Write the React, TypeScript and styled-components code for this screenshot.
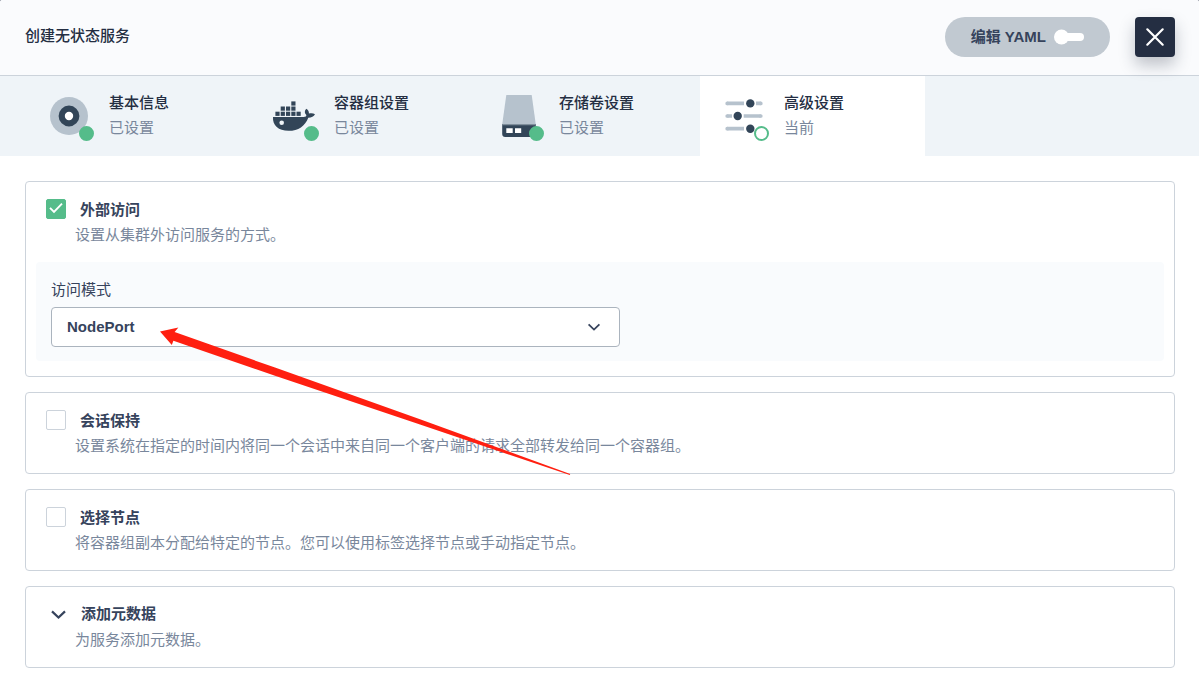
import React, { useState } from "react";
import styled, { createGlobalStyle, css } from "styled-components";

const GlobalStyle = createGlobalStyle`
  *, *::before, *::after { box-sizing: border-box; }
  html { background: #4a5266; }
  body { margin: 0; }
  body, button, select, input {
    font-family: "Liberation Sans", "Noto Sans CJK SC", sans-serif;
    font-size: 15px;
    line-height: 20px;
  }
  h1, h2, p { margin: 0; }
`;

const Page = styled.div`
  position: relative;
  min-height: 100vh;
  background: #fff;
  border-radius: 2px 2px 0 0;
  color: #36435c;
`;

const Header = styled.header`
  display: flex;
  align-items: center;
  gap: 25px;
  padding: 17px 24px 18px 25px;
  background: #fafbfd;
  border-bottom: 1px solid #ccd3db;
  border-radius: 2px 2px 0 0;
`;

const Title = styled.h1`
  flex: 1;
  padding-bottom: 2px;
  font-size: 15px;
  line-height: 20px;
  font-weight: 500;
  color: #242e42;
`;

const YamlButton = styled.button`
  display: flex;
  align-items: center;
  gap: 8px;
  height: 40px;
  padding: 0 26px;
  border: 0;
  border-radius: 20px;
  background: #c1c9d1;
  color: #36435c;
  font-weight: 700;
  white-space: nowrap;
`;

const CloseButton = styled.button`
  display: grid;
  place-items: center;
  width: 40px;
  height: 40px;
  padding: 0;
  border: 0;
  border-radius: 4px;
  background: #242e42;
  box-shadow: 0 8px 16px 0 rgba(36, 46, 66, 0.28);
`;

const Steps = styled.nav`
  display: flex;
  padding: 0 25px;
  background: #eff4f8;
`;

const Step = styled.button<{ $current: boolean }>`
  display: flex;
  align-items: center;
  gap: 20px;
  width: 225px;
  height: 80px;
  padding: 0 24px;
  border: 0;
  text-align: left;
  background: ${(p) => (p.$current ? "#fff" : "transparent")};
`;

const StepIcon = styled.span`
  position: relative;
  width: 40px;
  height: 40px;

  svg {
    display: block;
    overflow: visible;
  }
`;

const StatusDot = styled.span<{ $current: boolean }>`
  position: absolute;
  right: -5px;
  bottom: -5px;
  width: 15px;
  height: 15px;
  border: 2px solid #55bc8a;
  border-radius: 50%;
  background: ${(p) => (p.$current ? "#fff" : "#55bc8a")};
`;

const StepText = styled.span`
  display: grid;
  gap: 5px;
  padding-bottom: 2px;
`;

const StepName = styled.span`
  font-weight: 500;
  color: #242e42;
`;

const StepState = styled.span`
  color: #79879c;
`;

const Content = styled.main`
  display: grid;
  gap: 15px;
  padding: 25px 24px 20px 25px;
`;

const Card = styled.section`
  border: 1px solid #ccd3db;
  border-radius: 4px;
`;

const CardHead = styled.div`
  display: grid;
  gap: 6px;
  padding: 17px 20px;
`;

const headRow = css`
  display: flex;
  align-items: center;
  justify-self: start;
  height: 20px;
  font-weight: 700;
  color: #36435c;
`;

const CheckLabel = styled.label`
  ${headRow}
  gap: 14px;
`;

const CheckText = styled.span`
  padding-top: 2px;
`;

const ToggleButton = styled.button`
  ${headRow}
  gap: 11px;
  padding: 0;
  border: 0;
  background: none;
`;

const CheckBox = styled.span`
  display: grid;

  > * {
    grid-area: 1 / 1;
  }

  svg {
    pointer-events: none;
  }
`;

const CheckInput = styled.input`
  appearance: none;
  width: 20px;
  height: 20px;
  margin: 0;
  border: 1px solid #ccd3db;
  border-radius: 2px;
  background: #fff;

  &:checked {
    border-color: #55bc8a;
    background: #55bc8a;
  }
`;

const Description = styled.p`
  padding-left: 29px;
  color: #79879c;
`;

const Panel = styled.div`
  display: grid;
  gap: 7px;
  margin: 0 10px 15px;
  padding: 18px 15px 14px;
  border-radius: 4px;
  background: #f9fbfd;
`;

const SelectWrap = styled.div`
  display: grid;
  grid-template-columns: 1fr auto;
  align-items: center;
  width: calc(50% + 20px);

  svg {
    grid-area: 1 / 2;
    margin-right: 16px;
    pointer-events: none;
  }
`;

const SelectBox = styled.select`
  grid-area: 1 / 1 / 2 / 3;
  appearance: none;
  width: 100%;
  height: 40px;
  padding: 0 15px;
  border: 1px solid #abb4be;
  border-radius: 4px;
  background: #fff;
  color: #36435c;
  font-weight: 700;
`;

const Pointer = styled.svg`
  position: absolute;
  left: 160px;
  top: 327px;
  pointer-events: none;
`;

const DARK = "#324558";
const LIGHT = "#b6c2cd";

const DiscIcon = () => (
  <svg width="40" height="40" viewBox="0 0 40 40" aria-hidden="true">
    <circle cx="20" cy="20" r="19" fill={LIGHT} />
    <circle cx="20" cy="20" r="7.3" fill="#fff" stroke={DARK} strokeWidth="6.2" />
  </svg>
);

const crates = [
  [17.3, 5.4],
  [6.7, 10.5], [12, 10.5], [17.3, 10.5],
  [1.4, 15.7], [6.7, 15.7], [12, 15.7], [17.3, 15.7], [22.5, 15.7],
];

const WhaleIcon = () => (
  <svg width="40" height="40" viewBox="0 0 40 40" aria-hidden="true" fill={DARK}>
    {crates.map(([x, y]) => (
      <rect key={`${x}-${y}`} x={x} y={y} width="4.2" height="4.2" />
    ))}
    <path d="M-1 21H29.5C31.6 21 32.6 20.2 32.3 19C30.4 17.4 30.3 14.6 32.3 12.8C34.4 14.2 35.1 15.9 34.9 17.6C37 16.8 39.4 17.1 41 18.2C39.8 20.6 37.6 21.6 34.3 21.7C31 30 24.5 34.8 14.5 34.8C4.5 34.8 -1.6 29.4 -1 21Z" />
    <circle cx="7.7" cy="26.7" r="2.3" fill="#eff4f8" />
  </svg>
);

const DriveIcon = () => (
  <svg width="40" height="40" viewBox="0 0 40 40" aria-hidden="true">
    <path d="M7.3 -1H32.7L36.8 28.5H3.2Z" fill={LIGHT} />
    <path d="M3.2 28H36.8V38A3 3 0 0 1 33.8 41H6.2A3 3 0 0 1 3.2 38Z" fill={DARK} />
    <path d="M3.2 28H36.8V29.2H3.2Z" fill="#7f8e9b" />
    <path d="M7.3 32.2H13.7V37H7.3ZM16 32.2H22.2V37H16Z" fill="#fff" />
  </svg>
);

const SlidersIcon = () => (
  <svg width="40" height="40" viewBox="0 0 40 40" aria-hidden="true">
    <g stroke={LIGHT} strokeWidth="3.7">
      <path d="M3.2 7.4H20M32 7.4H36.8M3.2 20H8M19.7 20H36.8M3.2 32.7H20" />
      <path d="M3.2 7.4H3.3M36.7 7.4H36.8M3.2 20H3.3M36.7 20H36.8M3.2 32.7H3.3" strokeLinecap="round" />
    </g>
    <g fill={DARK}>
      <circle cx="26.3" cy="7.4" r="4.2" />
      <circle cx="13.7" cy="20" r="4.2" />
      <circle cx="26.3" cy="32.7" r="4.2" />
    </g>
  </svg>
);

const SwitchIcon = () => (
  <svg width="30" height="16" viewBox="0 0 30 16" aria-hidden="true" fill="#fff">
    <rect x="6" y="4" width="24" height="8" rx="4" />
    <circle cx="7.5" cy="8" r="7.5" />
  </svg>
);

const steps = [
  { name: "基本信息", state: "已设置", icon: <DiscIcon /> },
  { name: "容器组设置", state: "已设置", icon: <WhaleIcon /> },
  { name: "存储卷设置", state: "已设置", icon: <DriveIcon /> },
  { name: "高级设置", state: "当前", icon: <SlidersIcon />, current: true },
];

interface OptionProps {
  title: string;
  description: string;
  initial?: boolean;
  children?: React.ReactNode;
}

function OptionCard({ title, description, initial = false, children }: OptionProps) {
  const [checked, setChecked] = useState(initial);
  return (
    <Card>
      <CardHead>
        <CheckLabel>
          <CheckBox>
            <CheckInput type="checkbox" checked={checked} onChange={(e) => setChecked(e.target.checked)} />
            {checked && (
              <svg width="20" height="20" viewBox="0 0 20 20" aria-hidden="true">
                <path d="M4 8.8L8 12.8L16 4.6" fill="none" stroke="#fff" strokeWidth="1.9" />
              </svg>
            )}
          </CheckBox>
          <CheckText>{title}</CheckText>
        </CheckLabel>
        <Description>{description}</Description>
      </CardHead>
      {checked && children}
    </Card>
  );
}

export default function App() {
  return (
    <Page>
      <GlobalStyle />
      <Header>
        <Title>创建无状态服务</Title>
        <YamlButton type="button">
          编辑 YAML
          <SwitchIcon />
        </YamlButton>
        <CloseButton type="button" aria-label="关闭">
          <svg width="20" height="20" viewBox="0 0 20 20" aria-hidden="true">
            <path d="M2.3 2.3L17.7 17.7M17.7 2.3L2.3 17.7" stroke="#fff" strokeWidth="2.2" strokeLinecap="round" />
          </svg>
        </CloseButton>
      </Header>

      <Steps>
        {steps.map((s) => (
          <Step key={s.name} type="button" $current={!!s.current} aria-current={s.current ? "step" : undefined}>
            <StepIcon>
              {s.icon}
              <StatusDot $current={!!s.current} />
            </StepIcon>
            <StepText>
              <StepName>{s.name}</StepName>
              <StepState>{s.state}</StepState>
            </StepText>
          </Step>
        ))}
      </Steps>

      <Content>
        <OptionCard title="外部访问" description="设置从集群外访问服务的方式。" initial>
          <Panel>
            <label htmlFor="access-mode">访问模式</label>
            <SelectWrap>
              <SelectBox id="access-mode" defaultValue="NodePort">
                <option>NodePort</option>
                <option>LoadBalancer</option>
              </SelectBox>
              <svg width="20" height="20" viewBox="0 0 20 20" aria-hidden="true">
                <path d="M4.6 7.4L10 12.6L15.4 7.4" fill="none" stroke="#36435c" strokeWidth="1.8" />
              </svg>
            </SelectWrap>
          </Panel>
        </OptionCard>
        <OptionCard
          title="会话保持"
          description="设置系统在指定的时间内将同一个会话中来自同一个客户端的请求全部转发给同一个容器组。"
        />
        <OptionCard
          title="选择节点"
          description="将容器组副本分配给特定的节点。您可以使用标签选择节点或手动指定节点。"
        />
        <Card>
          <CardHead>
            <ToggleButton type="button" aria-expanded="false">
              <svg width="24" height="20" viewBox="0 0 24 20" aria-hidden="true">
                <path d="M6 7.4L12.5 13.6L19 7.4" fill="none" stroke="#36435c" strokeWidth="2.2" />
              </svg>
              添加元数据
            </ToggleButton>
            <Description>为服务添加元数据。</Description>
          </CardHead>
        </Card>
      </Content>

      <Pointer width="411" height="149" viewBox="0 0 411 149" aria-hidden="true">
        <path d="M0 4.6L18.4 0.6L14.6 5L115 40.6L260 92.2L410.2 147L409.8 148L260 97.6L115 48.8L13.4 13.8L11.8 18Z" fill="#ff1f10" />
      </Pointer>
    </Page>
  );
}
